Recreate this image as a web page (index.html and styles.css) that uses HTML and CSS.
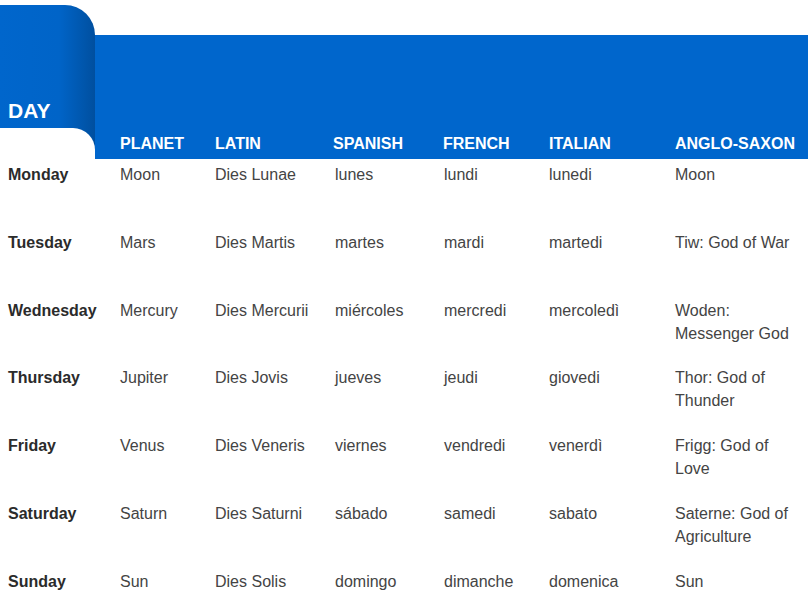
FILE: index.html
```html
<!DOCTYPE html>
<html lang="en">
<head>
<meta charset="utf-8">
<title>Days of the week</title>
<link rel="stylesheet" href="styles.css">
</head>
<body>
<div class="days">
  <div class="head">
    <div class="day-head">
      <div class="day-box"><span class="day-label">DAY</span></div>
      <div class="day-notch"><div class="notch-white"></div></div>
    </div>
    <div class="hcell">PLANET</div>
    <div class="hcell">LATIN</div>
    <div class="hcell sp">SPANISH</div>
    <div class="hcell fr">FRENCH</div>
    <div class="hcell">ITALIAN</div>
    <div class="hcell">ANGLO-SAXON</div>
  </div>
  <div class="body">
    <div class="cell day">Monday</div><div class="cell">Moon</div><div class="cell">Dies Lunae</div><div class="cell">lunes</div><div class="cell">lundi</div><div class="cell">lunedi</div><div class="cell">Moon</div>
    <div class="cell day">Tuesday</div><div class="cell">Mars</div><div class="cell">Dies Martis</div><div class="cell">martes</div><div class="cell">mardi</div><div class="cell">martedi</div><div class="cell">Tiw: God of War</div>
    <div class="cell day">Wednesday</div><div class="cell">Mercury</div><div class="cell">Dies Mercurii</div><div class="cell">miércoles</div><div class="cell">mercredi</div><div class="cell">mercoledì</div><div class="cell">Woden:<br>Messenger God</div>
    <div class="cell day">Thursday</div><div class="cell">Jupiter</div><div class="cell">Dies Jovis</div><div class="cell">jueves</div><div class="cell">jeudi</div><div class="cell">giovedi</div><div class="cell">Thor: God of<br>Thunder</div>
    <div class="cell day">Friday</div><div class="cell">Venus</div><div class="cell">Dies Veneris</div><div class="cell">viernes</div><div class="cell">vendredi</div><div class="cell">venerdì</div><div class="cell">Frigg: God of<br>Love</div>
    <div class="cell day">Saturday</div><div class="cell">Saturn</div><div class="cell">Dies Saturni</div><div class="cell">sábado</div><div class="cell">samedi</div><div class="cell">sabato</div><div class="cell">Saterne: God of<br>Agriculture</div>
    <div class="cell day">Sunday</div><div class="cell">Sun</div><div class="cell">Dies Solis</div><div class="cell">domingo</div><div class="cell">dimanche</div><div class="cell">domenica</div><div class="cell">Sun</div>
  </div>
</div>
</body>
</html>
```

FILE: styles.css
```css
html, body {
  margin: 0;
  padding: 0;
  background: #ffffff;
}

body {
  font-family: "Liberation Sans", Arial, sans-serif;
  width: 808px;
  overflow: hidden;
}

.head,
.body {
  display: grid;
  grid-template-columns: 120px 95px 120px 109px 105px 126px 133px;
}

.head {
  height: 159px;
  background: linear-gradient(#0066cc, #0066cc) 95px 35px / calc(100% - 95px) 124px no-repeat;
}

.day-head {
  width: 95px;
  height: 159px;
  display: flex;
  flex-direction: column;
}

.day-box {
  margin-top: 5px;
  height: 123px;
  border-top-right-radius: 30px;
  background: linear-gradient(to right, #0066cc 0%, #0064c8 62%, #0056ac 88%, #004f9f 100%);
  display: flex;
  align-items: flex-end;
  padding: 0 0 5px 8px;
  box-sizing: border-box;
}

.day-label {
  color: #ffffff;
  font-weight: bold;
  font-size: 21px;
  line-height: 24px;
}

.day-notch {
  height: 31px;
  background: linear-gradient(to right, #0066cc 0%, #0064c8 62%, #0056ac 88%, #004f9f 100%);
}

.notch-white {
  height: 100%;
  background: #ffffff;
  border-top-right-radius: 22px;
}

.hcell {
  align-self: end;
  color: #ffffff;
  font-weight: bold;
  font-size: 16px;
  line-height: 20px;
  padding-bottom: 5px;
  white-space: nowrap;
}

.hcell.sp {
  margin-left: -2px;
}

.hcell.fr {
  margin-left: -1px;
}

.body {
  grid-auto-rows: 67.8px;
  padding-top: 4px;
}

.cell {
  font-size: 16px;
  line-height: 23px;
  color: #444444;
  white-space: nowrap;
}

.cell.day {
  padding-left: 8px;
  font-weight: bold;
  color: #2b2b2b;
}
```
